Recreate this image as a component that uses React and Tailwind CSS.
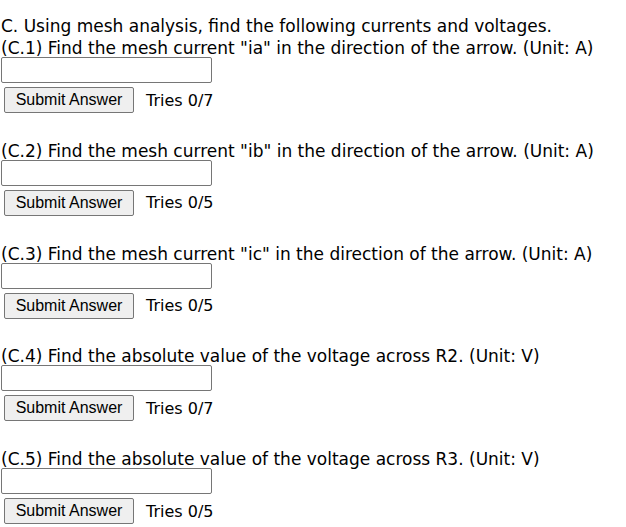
const questions = [
  { id: "C.1", text: 'Find the mesh current "ia" in the direction of the arrow. (Unit: A)', tries: "0/7" },
  { id: "C.2", text: 'Find the mesh current "ib" in the direction of the arrow. (Unit: A)', tries: "0/5" },
  { id: "C.3", text: 'Find the mesh current "ic" in the direction of the arrow. (Unit: A)', tries: "0/5" },
  { id: "C.4", text: "Find the absolute value of the voltage across R2. (Unit: V)", tries: "0/7" },
  { id: "C.5", text: "Find the absolute value of the voltage across R3. (Unit: V)", tries: "0/5" },
];

function Question({ q, first }) {
  return (
    <div className={first ? "" : "mt-[26.75px]"}>
      <div className="h-[22px] leading-[22px] text-[17px] whitespace-nowrap">
        ({q.id}) {q.text}
      </div>
      <input
        type="text"
        className="block mt-[-2px] w-[211px] h-[26px] border border-[#767676] rounded-[2px] bg-white px-1 outline-none"
      />
      <div className="flex items-center mt-[4px] h-[26px]">
        <button className="ml-[3px] h-[26px] w-[130px] border border-[#767676] rounded-[2px] bg-[#efefef] text-black text-[16px] leading-none font-['Liberation_Sans',Arial,sans-serif]">
          Submit Answer
        </button>
        <span className="ml-[12px] leading-[22px] pt-[1px]">Tries {q.tries}</span>
      </div>
    </div>
  );
}

export default function App() {
  return (
    <div className="w-[626px] h-[527px] bg-white text-black text-[16px] pl-[1px] pt-[15px] font-['DejaVu_Sans',Verdana,sans-serif] overflow-hidden">
      <div className="h-[22px] leading-[22px] text-[17px] whitespace-nowrap">
        C. Using mesh analysis, find the following currents and voltages.
      </div>
      {questions.map((q, i) => (
        <Question key={q.id} q={q} first={i === 0} />
      ))}
    </div>
  );
}
